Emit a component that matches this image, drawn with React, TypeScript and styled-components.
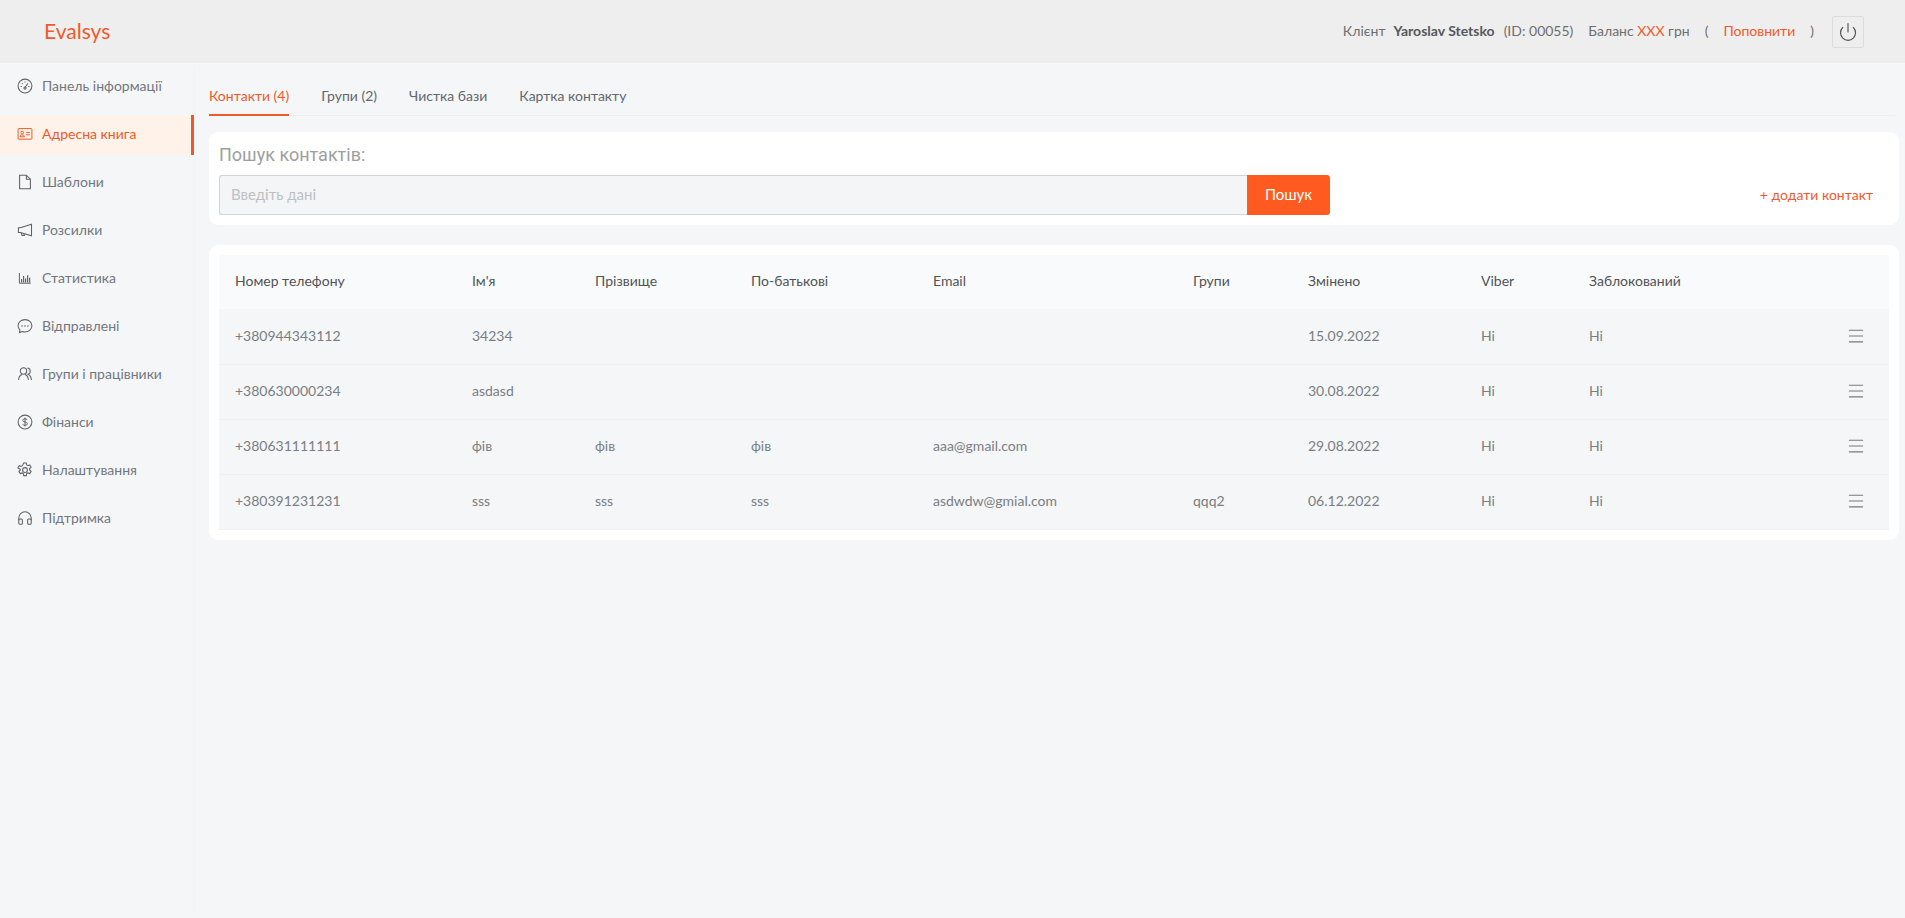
import styled, { createGlobalStyle } from 'styled-components';
import { Menu, Power } from 'lucide-react';

const GlobalStyle = createGlobalStyle`
  html, body {
    margin: 0;
    height: 100%;
    background: #f5f6f8;
    font-family: Lato, "Noto Sans", sans-serif;
    overflow: hidden;
  }
  * { box-sizing: border-box; }
`;

const accent = '#f1592a';

const Page = styled.div`
  display: flex;
  flex-direction: column;
  height: 918px;
`;

const TopBar = styled.header`
  display: flex;
  align-items: center;
  justify-content: space-between;
  height: 63px;
  padding: 0 41px 0 44px;
  background: #eeeeee;
  color: #6f6f6f;
  font-size: 14px;
`;

const Logo = styled.div`
  padding-bottom: 3px;
  font-size: 21px;
  color: ${accent};
`;

const Account = styled.div`
  display: flex;
  align-items: center;
  white-space: pre;
`;

const AccountText = styled.span`
  padding-bottom: 2px;
`;

const ClientName = styled.b`
  margin: 0 9px 0 8px;
  padding-bottom: 2px;
  color: #55585c;
  font-weight: 700;
`;

const Balance = styled.span`
  margin-left: 15px;
  padding-bottom: 2px;
`;

const Red = styled.span`
  padding-bottom: 2px;
  color: ${accent};
`;

const Brace = styled.span`
  margin: 0 15px;
  padding-bottom: 2px;
`;

const PowerButton = styled.button`
  display: flex;
  align-items: center;
  justify-content: center;
  width: 32px;
  height: 32px;
  margin-left: 3px;
  padding: 0;
  background: #eeeeee;
  border: 1px solid #dcdcdc;
  border-radius: 2px;
  color: #555;
`;

const Body = styled.div`
  display: flex;
  flex: 1;
  min-height: 0;
`;

const Sidebar = styled.nav`
  display: flex;
  flex-direction: column;
  width: 194px;
  padding-top: 4px;
  background: #f4f6f8;
  box-shadow: 1px 0 2px rgba(0, 0, 0, 0.012);
`;

const NavItem = styled.div<{ $active?: boolean }>`
  display: flex;
  align-items: center;
  gap: 9px;
  height: 40px;
  margin-bottom: 8px;
  padding: 0 0 3px 17px;
  font-size: 14px;
  color: ${(p) => (p.$active ? accent : '#73777c')};
  background: ${(p) => (p.$active ? '#fff3e9' : 'transparent')};
  border-right: 3px solid ${(p) => (p.$active ? accent : 'transparent')};
  svg {
    flex: none;
    width: 16px;
    height: 16px;
    color: ${(p) => (p.$active ? accent : '#5f6266')};
  }
`;

const Main = styled.main`
  flex: 1;
  min-width: 0;
  padding: 22px 6px 0 15px;
`;

const Tabs = styled.div`
  display: flex;
  gap: 32px;
  margin: 0 4px 16px 0;
  box-shadow: inset 0 -1px 0 #eceef0;
`;

const Tab = styled.div<{ $active?: boolean }>`
  height: 31px;
  line-height: 22px;
  font-size: 14px;
  color: ${(p) => (p.$active ? accent : '#63676c')};
  border-bottom: 2px solid ${(p) => (p.$active ? accent : 'transparent')};
`;

const Card = styled.section`
  margin-bottom: 20px;
  padding: 10px;
  background: #fff;
  border-radius: 9px;
`;

const SearchTitle = styled.div`
  height: 33px;
  line-height: 26px;
  font-family: Roboto, sans-serif;
  font-size: 18px;
  color: #9e9e9e;
`;

const SearchRow = styled.div`
  display: flex;
  align-items: center;
  justify-content: space-between;
`;

const SearchGroup = styled.div`
  display: flex;
  width: 1111px;
`;

const SearchInput = styled.input`
  flex: 1;
  height: 40px;
  padding: 0 12px 2px 11px;
  background: #f4f5f7;
  border: 1px solid #d2d4d7;
  border-right: 0;
  border-radius: 3px 0 0 3px;
  font-family: inherit;
  font-size: 15px;
  &::placeholder {
    color: #bdbfc2;
  }
`;

const SearchButton = styled.button`
  width: 83px;
  height: 40px;
  padding: 0 0 2px;
  background: #ff5a1f;
  border: 0;
  border-radius: 0 3px 3px 0;
  color: #fff;
  font-family: inherit;
  font-size: 15px;
`;

const AddLink = styled.a`
  margin-right: 16px;
  padding-bottom: 2px;
  font-size: 14px;
  color: ${accent};
`;

const Table = styled.table`
  width: 100%;
  border-collapse: collapse;
  table-layout: fixed;
  font-size: 14px;
`;

const HeadRow = styled.tr`
  height: 54px;
  background: #f9fafb;
`;

const Th = styled.th<{ $w?: number }>`
  width: ${(p) => (p.$w ? `${p.$w}px` : 'auto')};
  padding: 0 16px 4px;
  text-align: left;
  font-weight: 400;
  color: #505357;
`;

const Row = styled.tr`
  height: 55px;
  background: #f4f6f8;
  border-bottom: 1px solid #eef0f2;
`;

const Td = styled.td`
  padding: 0 16px 2px;
  color: #7a7e83;
`;

const ActionCell = styled.td`
  padding: 0 23px 1px 0;
  color: #77797c;
  svg {
    display: block;
    margin-left: auto;
  }
`;

const base = { viewBox: '0 0 16 16', fill: 'none', stroke: 'currentColor', strokeWidth: 1.05 };

const GaugeIcon = () => (
  <svg {...base}>
    <circle cx="8" cy="8" r="6.9" />
    <path d="M8 9.5 11 5.2M3.6 8.4h1.2M4.9 5l.8.8M8 3.4v1.2M12.4 8.4h-1.2" />
    <circle cx="8" cy="10" r="1.1" />
  </svg>
);

const CardIcon = () => (
  <svg {...base} strokeWidth={1}>
    <rect x="1.1" y="2.6" width="13.8" height="10.6" rx="0.6" />
    <circle cx="5.2" cy="6.6" r="1.3" />
    <path d="M3 10.8c.2-1.4 1-2 2.2-2s2 .6 2.2 2zM9.2 6.4h3.6M9.2 8.8h3.6" />
  </svg>
);

const FileIcon = () => (
  <svg {...base}>
    <path d="M2.6 1.2h6.8l4 4v9.6H2.6z" />
    <path d="M9.4 1.2v4h4" />
  </svg>
);

const MegaphoneIcon = () => (
  <svg {...base}>
    <path d="M14.5 2.2v11.6L3.4 10.4H1.4V5.8h2z" />
    <path d="M4.2 10.6 5 13.4h2.4l-.7-2.1" />
  </svg>
);

const ChartIcon = () => (
  <svg {...base}>
    <path d="M2.4 3v10.2h11.4" strokeWidth={1} />
    <path d="M4.6 12.4V9M6.6 12.4V6M8.6 12.4V8.4M10.6 12.4V5.2M12.6 12.4V7.8" strokeWidth={1.2} />
  </svg>
);

const ChatIcon = () => (
  <svg {...base}>
    <path d="M8 1.6c3.9 0 6.9 2.7 6.9 6.2S11.9 14 8 14c-1 0-2-.2-2.8-.5L2.4 14.6l.5-2.7C1.8 10.8 1.1 9.4 1.1 7.8 1.1 4.3 4.1 1.6 8 1.6z" />
    <circle cx="5" cy="8" r="0.8" fill="currentColor" stroke="none" />
    <circle cx="8" cy="8" r="0.8" fill="currentColor" stroke="none" />
    <circle cx="11" cy="8" r="0.8" fill="currentColor" stroke="none" />
  </svg>
);

const PeopleIcon = () => (
  <svg {...base}>
    <circle cx="6.5" cy="5" r="3.2" />
    <path d="M1.6 14c.2-3 1.5-4.8 3.4-5.5M8 8.5c1.9.7 3.2 2.5 3.4 5.5" />
    <path d="M10.4 2.1a3.2 3.2 0 0 1 .7 6.2c1.9.8 3.1 2.7 3.4 5.7" />
  </svg>
);

const DollarIcon = () => (
  <svg {...base}>
    <circle cx="8" cy="8" r="6.9" />
    <path d="M10.2 6.1C10 5.2 9.1 4.8 8 4.8c-1.3 0-2.2.6-2.2 1.6 0 2.3 4.6 1 4.6 3.3 0 1-1 1.6-2.4 1.6-1.2 0-2.1-.5-2.3-1.4M8 3.6v8.8" strokeWidth={1} />
  </svg>
);

const GearIcon = () => (
  <svg {...base} strokeWidth={1.05}>
    <circle cx="8" cy="8" r="2.4" />
    <path d="M6.7 1h2.6l.4 2 1.2.7 1.9-.7 1.3 2.3-1.5 1.3v1.4l1.5 1.3-1.3 2.3-1.9-.7-1.2.7-.4 2H6.7l-.4-2-1.2-.7-1.9.7-1.3-2.3 1.5-1.3V7.3L.9 6l1.3-2.3 1.9.7 1.2-.7z" />
  </svg>
);

const HeadsetIcon = () => (
  <svg {...base}>
    <path d="M1.8 10.5V8a6.2 6.2 0 0 1 12.4 0v2.5" />
    <rect x="1.8" y="9" width="3.6" height="5.2" rx="1" />
    <rect x="10.6" y="9" width="3.6" height="5.2" rx="1" />
  </svg>
);

const navItems = [
  { label: 'Панель інформації', icon: <GaugeIcon /> },
  { label: 'Адресна книга', icon: <CardIcon />, active: true },
  { label: 'Шаблони', icon: <FileIcon /> },
  { label: 'Розсилки', icon: <MegaphoneIcon /> },
  { label: 'Статистика', icon: <ChartIcon /> },
  { label: 'Відправлені', icon: <ChatIcon /> },
  { label: 'Групи і працівники', icon: <PeopleIcon /> },
  { label: 'Фінанси', icon: <DollarIcon /> },
  { label: 'Налаштування', icon: <GearIcon /> },
  { label: 'Підтримка', icon: <HeadsetIcon /> },
];

const columns = [
  { title: 'Номер телефону', width: 237 },
  { title: "Ім'я", width: 123 },
  { title: 'Прізвище', width: 156 },
  { title: 'По-батькові', width: 182 },
  { title: 'Email', width: 260 },
  { title: 'Групи', width: 115 },
  { title: 'Змінено', width: 173 },
  { title: 'Viber', width: 108 },
  { title: 'Заблокований', width: 220 },
];

const contacts = [
  ['+380944343112', '34234', '', '', '', '', '15.09.2022', 'Ні', 'Ні'],
  ['+380630000234', 'asdasd', '', '', '', '', '30.08.2022', 'Ні', 'Ні'],
  ['+380631111111', 'фів', 'фів', 'фів', 'aaa@gmail.com', '', '29.08.2022', 'Ні', 'Ні'],
  ['+380391231231', 'sss', 'sss', 'sss', 'asdwdw@gmial.com', 'qqq2', '06.12.2022', 'Ні', 'Ні'],
];

export default function App() {
  return (
    <Page>
      <GlobalStyle />
      <TopBar>
        <Logo>Evalsys</Logo>
        <Account>
          <AccountText>Клієнт</AccountText>
          <ClientName>Yaroslav Stetsko</ClientName>
          <AccountText>(ID: 00055)</AccountText>
          <Balance>
            Баланс <Red>XXX</Red> грн
          </Balance>
          <Brace>(</Brace>
          <Red>Поповнити</Red>
          <Brace>)</Brace>
          <PowerButton>
            <Power size={20} strokeWidth={1.4} />
          </PowerButton>
        </Account>
      </TopBar>
      <Body>
        <Sidebar>
          {navItems.map((item) => (
            <NavItem key={item.label} $active={item.active}>
              {item.icon}
              {item.label}
            </NavItem>
          ))}
        </Sidebar>
        <Main>
          <Tabs>
            <Tab $active>Контакти (4)</Tab>
            <Tab>Групи (2)</Tab>
            <Tab>Чистка бази</Tab>
            <Tab>Картка контакту</Tab>
          </Tabs>
          <Card>
            <SearchTitle>Пошук контактів:</SearchTitle>
            <SearchRow>
              <SearchGroup>
                <SearchInput placeholder="Введіть дані" />
                <SearchButton>Пошук</SearchButton>
              </SearchGroup>
              <AddLink>+ додати контакт</AddLink>
            </SearchRow>
          </Card>
          <Card>
            <Table>
              <thead>
                <HeadRow>
                  {columns.map((col) => (
                    <Th key={col.title} $w={col.width}>
                      {col.title}
                    </Th>
                  ))}
                  <Th />
                </HeadRow>
              </thead>
              <tbody>
                {contacts.map((row) => (
                  <Row key={row[0]}>
                    {row.map((cell, i) => (
                      <Td key={i}>{cell}</Td>
                    ))}
                    <ActionCell>
                      <Menu size={20} strokeWidth={1.3} />
                    </ActionCell>
                  </Row>
                ))}
              </tbody>
            </Table>
          </Card>
        </Main>
      </Body>
    </Page>
  );
}
